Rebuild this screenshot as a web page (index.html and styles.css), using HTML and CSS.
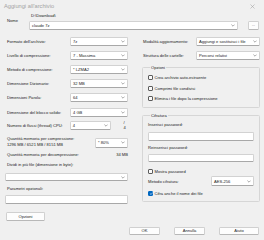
FILE: index.html
```html
<!DOCTYPE html>
<html lang="it">
<head>
    <meta charset="UTF-8">
    <meta name="viewport" content="width=device-width, initial-scale=1.0">
    <title>Aggiungi all'archivio</title>
    <link rel="stylesheet" href="styles.css">
</head>
<body>
<div class="dialog">

    <!-- Title bar -->
    <div class="titlebar">
        <span class="title">Aggiungi all'archivio</span>
        <svg class="close" width="5" height="5" viewBox="0 0 5 5"><path d="M0.5 0.5L4.5 4.5M4.5 0.5L0.5 4.5" stroke="#9a9a9a" stroke-width="0.5"/></svg>
    </div>

    <!-- Archive name -->
    <div class="name-row">
        <span class="name-label">Nome</span>
        <div class="name-fields">
            <span class="path">D:\Download\</span>
            <div class="name-line">
                <div class="combo name-combo"><span>claude 7z</span><svg class="chev" width="4" height="3" viewBox="0 0 4 3"><path d="M0.4 0.6L2 2.2L3.6 0.6" fill="none" stroke="#555" stroke-width="0.5"/></svg></div>
                <div class="btn browse">...</div>
            </div>
        </div>
    </div>

    <div class="columns">

        <!-- Left column -->
        <div class="col-left">
            <div class="form-grid">
                <span>Formato dell'archivio:</span>
                <div class="combo"><span>7z</span><svg class="chev" width="4" height="3" viewBox="0 0 4 3"><path d="M0.4 0.6L2 2.2L3.6 0.6" fill="none" stroke="#555" stroke-width="0.5"/></svg></div>
                <span>Livello di compressione:</span>
                <div class="combo"><span>7 - Massima</span><svg class="chev" width="4" height="3" viewBox="0 0 4 3"><path d="M0.4 0.6L2 2.2L3.6 0.6" fill="none" stroke="#555" stroke-width="0.5"/></svg></div>
                <span>Metodo di compressione:</span>
                <div class="combo"><span>* LZMA2</span><svg class="chev" width="4" height="3" viewBox="0 0 4 3"><path d="M0.4 0.6L2 2.2L3.6 0.6" fill="none" stroke="#555" stroke-width="0.5"/></svg></div>
                <span>Dimensione Dizionario:</span>
                <div class="combo"><span>32 MB</span><svg class="chev" width="4" height="3" viewBox="0 0 4 3"><path d="M0.4 0.6L2 2.2L3.6 0.6" fill="none" stroke="#555" stroke-width="0.5"/></svg></div>
                <span>Dimensioni Parola:</span>
                <div class="combo"><span>64</span><svg class="chev" width="4" height="3" viewBox="0 0 4 3"><path d="M0.4 0.6L2 2.2L3.6 0.6" fill="none" stroke="#555" stroke-width="0.5"/></svg></div>
                <span>Dimensione del blocco solido:</span>
                <div class="combo"><span>4 GB</span><svg class="chev" width="4" height="3" viewBox="0 0 4 3"><path d="M0.4 0.6L2 2.2L3.6 0.6" fill="none" stroke="#555" stroke-width="0.5"/></svg></div>
            </div>

            <div class="thread-row">
                <span class="thread-label">Numero di flussi (thread) CPU:</span>
                <div class="combo thread-combo"><span>4</span><svg class="chev" width="4" height="3" viewBox="0 0 4 3"><path d="M0.4 0.6L2 2.2L3.6 0.6" fill="none" stroke="#555" stroke-width="0.5"/></svg></div>
                <span class="thread-max">/ 4</span>
            </div>

            <div class="mem-row">
                <div class="mem-text">
                    <span>Quantità memoria per compressione:</span>
                    <span>1296 MB / 6521 MB / 8151 MB</span>
                </div>
                <div class="combo mem-combo"><span>* 80%</span><svg class="chev" width="4" height="3" viewBox="0 0 4 3"><path d="M0.4 0.6L2 2.2L3.6 0.6" fill="none" stroke="#555" stroke-width="0.5"/></svg></div>
            </div>

            <div class="decomp-row">
                <span>Quantità memoria per decompressione:</span>
                <span>34 MB</span>
            </div>

            <div class="text-line split-label">Dividi in più file (dimensione in byte):</div>
            <div class="combo wide split-combo"><span></span><svg class="chev" width="4" height="3" viewBox="0 0 4 3"><path d="M0.4 0.6L2 2.2L3.6 0.6" fill="none" stroke="#555" stroke-width="0.5"/></svg></div>

            <div class="text-line params-label">Parametri opzionali:</div>
            <div class="textbox wide params-box"></div>

            <div class="btn options-btn">Opzioni</div>
        </div>

        <!-- Right column -->
        <div class="col-right">
            <div class="form-grid right-grid">
                <span>Modalità aggiornamento:</span>
                <div class="combo"><span>Aggiungi e sostituisci i file</span><svg class="chev" width="4" height="3" viewBox="0 0 4 3"><path d="M0.4 0.6L2 2.2L3.6 0.6" fill="none" stroke="#555" stroke-width="0.5"/></svg></div>
                <span>Struttura delle cartelle:</span>
                <div class="combo"><span>Percorsi relativi</span><svg class="chev" width="4" height="3" viewBox="0 0 4 3"><path d="M0.4 0.6L2 2.2L3.6 0.6" fill="none" stroke="#555" stroke-width="0.5"/></svg></div>
            </div>

            <fieldset class="group options-group">
                <legend>Opzioni</legend>
                <div class="check-row"><span class="check"></span>Crea archivio auto-estraente</div>
                <div class="check-row"><span class="check"></span>Comprimi file condivisi</div>
                <div class="check-row"><span class="check"></span>Elimina i file dopo la compressione</div>
            </fieldset>

            <fieldset class="group cipher-group">
                <legend>Cifratura</legend>
                <div class="text-line pw-label">Inserisci password:</div>
                <div class="textbox pw-box"></div>
                <div class="text-line pw-label2">Reinserisci password:</div>
                <div class="textbox pw-box2"></div>
                <div class="check-row show-pw"><span class="check"></span>Mostra password</div>
                <div class="cipher-row">
                    <span>Metodo cifratura:</span>
                    <div class="combo cipher-combo"><span>AES-256</span><svg class="chev" width="4" height="3" viewBox="0 0 4 3"><path d="M0.4 0.6L2 2.2L3.6 0.6" fill="none" stroke="#555" stroke-width="0.5"/></svg></div>
                </div>
                <div class="check-row names-row"><span class="check checked"><svg width="5" height="5" viewBox="0 0 5 5"><path d="M1.1 2.6L2.1 3.5L3.9 1.4" fill="none" stroke="#fff" stroke-width="0.6"/></svg></span>Cifra anche il nome dei file</div>
            </fieldset>
        </div>
    </div>

    <!-- Dialog buttons -->
    <div class="footer">
        <div class="btn ok-btn">OK</div>
        <div class="btn cancel-btn">Annulla</div>
        <div class="btn help-btn">Aiuto</div>
    </div>
</div>
</body>
</html>
```

FILE: styles.css
```css
body {
    margin: 0;
    background: #f0f0f0;
    font-family: 'Liberation Sans', Arial, sans-serif;
    font-size: 4.1px;
    color: #222;
}
.dialog {
    width: 264px;
    height: 240px;
    background: #f0f0f0;
    overflow: hidden;
}
.titlebar {
    height: 12px;
    display: flex;
    align-items: center;
    justify-content: space-between;
    padding: 0 9px 0 4px;
}
.title {
    font-size: 5.7px;
    color: #a3a3a3;
}
.close {
    display: block;
}
.name-row {
    display: flex;
    align-items: center;
    margin: 1px 0 0 7px;
}
.name-label {
    width: 22px;
    margin-top: -1px;
}
.name-fields {
    display: flex;
    flex-direction: column;
}
.path {
    line-height: 6px;
    padding-left: 2px;
    margin-bottom: 2px;
}
.name-line {
    display: flex;
    gap: 10px;
}
.combo {
    display: flex;
    align-items: center;
    justify-content: space-between;
    height: 9px;
    box-sizing: border-box;
    background: #fff;
    border: 0.5px solid #d2d2d2;
    border-bottom-color: #a8a8a8;
    border-radius: 1.5px;
    padding: 0 2.5px 0 2px;
    white-space: nowrap;
}
.chev {
    display: block;
    flex-shrink: 0;
}
.name-combo {
    width: 209px;
    height: 8.5px;
}
.btn {
    display: flex;
    align-items: center;
    justify-content: center;
    box-sizing: border-box;
    background: #fdfdfd;
    border: 0.5px solid #d0d0d0;
    border-bottom-color: #b8b8b8;
    border-radius: 1.5px;
}
.browse {
    width: 11px;
    height: 8.5px;
    line-height: 1;
    padding-bottom: 1px;
}
.columns {
    display: flex;
    margin-top: 4.5px;
}
.col-left {
    width: 123px;
    margin-left: 5px;
}
.col-right {
    width: 118px;
    margin-left: 14px;
}
.form-grid {
    display: grid;
    grid-template-columns: 63px 58px;
    grid-auto-rows: 14.2px;
    align-items: center;
    padding-left: 2px;
}
.right-grid {
    grid-template-columns: 53px 64px;
    padding-left: 1px;
}
.thread-row {
    display: flex;
    align-items: center;
    height: 12px;
    padding-left: 2px;
}
.thread-label {
    width: 63px;
}
.thread-combo {
    width: 42px;
}
.thread-max {
    margin-left: 12px;
}
.mem-row {
    display: flex;
    justify-content: space-between;
    margin-top: 4.8px;
    padding-left: 2px;
}
.mem-text {
    display: flex;
    flex-direction: column;
    line-height: 6px;
}
.mem-combo {
    width: 33px;
    height: 10px;
    margin-top: 2px;
}
.decomp-row {
    display: flex;
    justify-content: space-between;
    line-height: 6px;
    margin-top: 4px;
    padding-left: 2px;
}
.text-line {
    line-height: 6px;
}
.split-label {
    margin-top: 4px;
    padding-left: 2px;
}
.wide {
    width: 123px;
}
.split-combo {
    margin-top: 5px;
    height: 8.5px;
}
.params-label {
    margin-top: 4.5px;
    padding-left: 2px;
}
.textbox {
    box-sizing: border-box;
    height: 9px;
    background: #fff;
    border: 0.5px solid #d2d2d2;
    border-bottom-color: #a8a8a8;
    border-radius: 1.5px;
}
.params-box {
    margin-top: 3px;
}
.options-btn {
    width: 39px;
    height: 9px;
    margin: 8px 0 0 1px;
}
.group {
    margin: 0;
    padding: 0 5px;
    border: 0.5px solid #d6d6d6;
    border-radius: 1.5px;
}
.group legend {
    padding: 0 1px;
    margin-left: 2px;
    line-height: 6px;
}
.options-group {
    margin-top: 2.6px;
    padding-top: 1.5px;
    padding-bottom: 3px;
}
.check-row {
    display: flex;
    align-items: center;
    height: 10.5px;
}
.check {
    display: block;
    width: 5px;
    height: 5px;
    box-sizing: border-box;
    border: 0.5px solid #5c5c5c;
    border-radius: 1px;
    background: #fafafa;
    margin-right: 1.5px;
}
.check svg {
    display: block;
}
.check.checked {
    background: #0067c0;
    border-color: #0067c0;
}
.check.checked svg {
    margin: -0.5px;
}
.cipher-group {
    margin-top: 5px;
    padding-top: 3px;
    padding-bottom: 5px;
}
.pw-box {
    margin-top: 4px;
}
.pw-label2 {
    margin-top: 4px;
}
.pw-box2 {
    margin-top: 3px;
    height: 8.5px;
}
.show-pw {
    height: 6px;
    margin-top: 6px;
}
.cipher-row {
    display: flex;
    align-items: center;
    justify-content: space-between;
    margin-top: 2px;
}
.cipher-combo {
    width: 43px;
    height: 10px;
}
.names-row {
    height: 6px;
    margin-top: 4px;
}
.footer {
    display: flex;
    justify-content: flex-end;
    gap: 14px;
    margin-top: 6px;
    padding-right: 5px;
}
.footer .btn {
    height: 8px;
}
.ok-btn {
    width: 31px;
}
.cancel-btn {
    width: 31px;
}
.help-btn {
    width: 40px;
}
```
